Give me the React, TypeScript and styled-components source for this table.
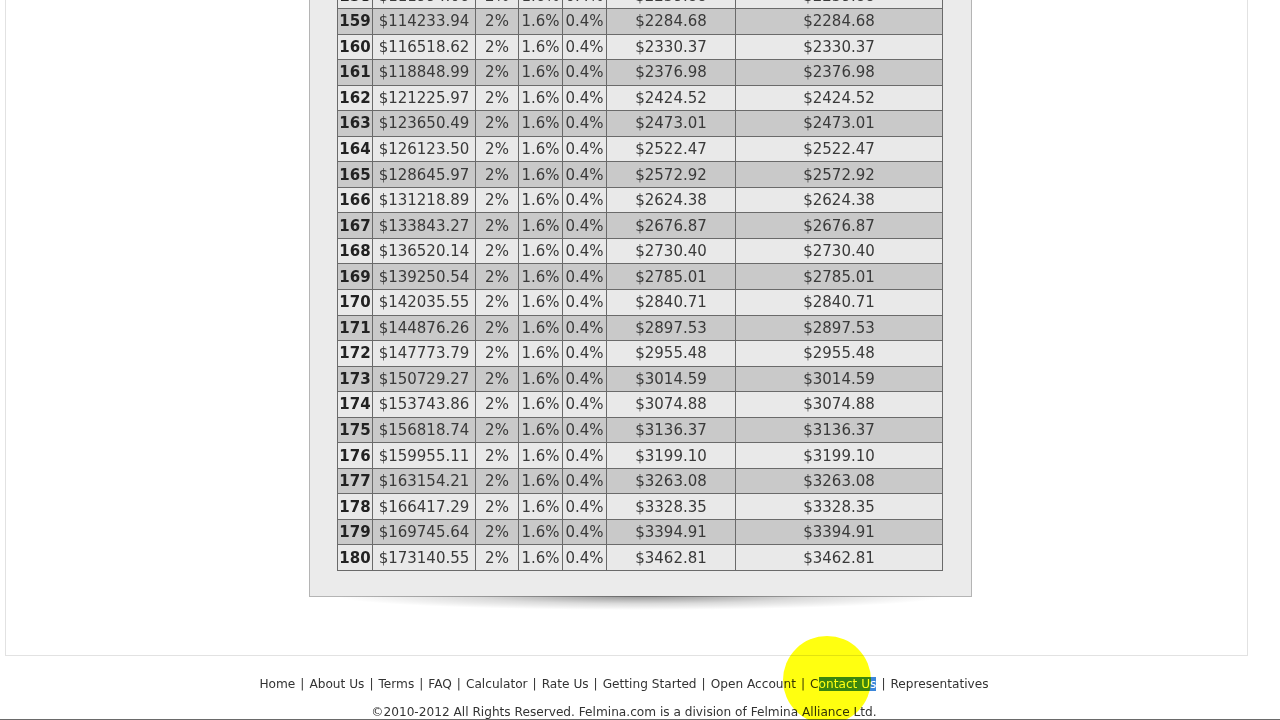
import React from "react";
import styled, { createGlobalStyle } from "styled-components";

const Global = createGlobalStyle`
  html, body { margin: 0; padding: 0; background: #ffffff; overflow: hidden; }
  body { font-family: "DejaVu Sans", Verdana, sans-serif; color: #333; }
`;

const Root = styled.div`
  position: relative;
  width: 1280px;
  margin-top: -46.55px;
`;

const ContentBox = styled.div`
  margin-left: 5px;
  width: 1243px;
  border: 1px solid #e2e2e2;
  border-top: none;
  padding: 0 275px 58px 303px;
  box-sizing: border-box;
`;

const Panel = styled.div`
  position: relative;
  width: 663px;
  box-sizing: border-box;
  background: #ebebeb;
  border: 1px solid #b4b4b4;
  padding: 28px 28px 25px 27px;
  &::after {
    content: "";
    position: absolute;
    left: 4%;
    right: 4%;
    bottom: -14px;
    height: 14px;
    background: radial-gradient(ellipse 50% 100% at 50% 0%, rgba(0,0,0,0.42), rgba(0,0,0,0.14) 55%, rgba(0,0,0,0) 100%);
  }
`;

const Table = styled.table`
  border-collapse: collapse;
  table-layout: fixed;
  width: 606px;
  font-family: "DejaVu Sans", Verdana, sans-serif;
  font-size: 15px;
  color: #333;
`;

const Row = styled.tr<{ $odd: boolean }>`
  height: 25.55px;
  background: ${(p) => (p.$odd ? "#c9c9c9" : "#e9e9e9")};
`;

const Cell = styled.td<{ $bold?: boolean }>`
  border: 1px solid #6a6a6a;
  padding: 0;
  text-align: center;
  white-space: nowrap;
  line-height: 18px;
  font-weight: ${(p) => (p.$bold ? 700 : 400)};
  color: ${(p) => (p.$bold ? "#222" : "#3a3a3a")};
`;

const Footer = styled.footer`
  width: 1248px;
  padding-top: 20px;
  text-align: center;
  font-family: "DejaVu Sans", Verdana, sans-serif;
  font-size: 12.15px;
  color: #333;
`;

const Links = styled.div`
  line-height: 16px;
`;

const Link = styled.span`
  position: relative;
`;

const Sep = styled.span`
  margin: 0 5px;
`;

const Selected = styled.span`
  background: #3b86da;
  color: #ffffff;
`;

const Copyright = styled.div`
  margin-top: 13px;
  line-height: 14px;
`;

const BottomRule = styled.div`
  width: 1280px;
  height: 3px;
  background: #6a6a6a;
`;

const Highlight = styled.div`
  position: absolute;
  left: -27px;
  top: -41px;
  width: 88px;
  height: 88px;
  border-radius: 50%;
  background: #ffff10;
  mix-blend-mode: multiply;
  pointer-events: none;
`;

const rows: [number, string, string][] = [
  [158, "$111994.06", "$2239.88"],
  [159, "$114233.94", "$2284.68"],
  [160, "$116518.62", "$2330.37"],
  [161, "$118848.99", "$2376.98"],
  [162, "$121225.97", "$2424.52"],
  [163, "$123650.49", "$2473.01"],
  [164, "$126123.50", "$2522.47"],
  [165, "$128645.97", "$2572.92"],
  [166, "$131218.89", "$2624.38"],
  [167, "$133843.27", "$2676.87"],
  [168, "$136520.14", "$2730.40"],
  [169, "$139250.54", "$2785.01"],
  [170, "$142035.55", "$2840.71"],
  [171, "$144876.26", "$2897.53"],
  [172, "$147773.79", "$2955.48"],
  [173, "$150729.27", "$3014.59"],
  [174, "$153743.86", "$3074.88"],
  [175, "$156818.74", "$3136.37"],
  [176, "$159955.11", "$3199.10"],
  [177, "$163154.21", "$3263.08"],
  [178, "$166417.29", "$3328.35"],
  [179, "$169745.64", "$3394.91"],
  [180, "$173140.55", "$3462.81"],
];

const widths = [35, 103, 43, 44, 44, 129, 207];

const links = [
  "Home",
  "About Us",
  "Terms",
  "FAQ",
  "Calculator",
  "Rate Us",
  "Getting Started",
  "Open Account",
  "Contact Us",
  "Representatives",
];

export default function App() {
  return (
    <Root>
      <Global />
      <ContentBox>
        <Panel>
          <Table>
            <colgroup>
              {widths.map((w, i) => (
                <col key={i} style={{ width: w }} />
              ))}
            </colgroup>
            <tbody>
              {rows.map(([n, bal, amt]) => (
                <Row key={n} $odd={n % 2 === 1}>
                  <Cell $bold>{n}</Cell>
                  <Cell>{bal}</Cell>
                  <Cell>2%</Cell>
                  <Cell>1.6%</Cell>
                  <Cell>0.4%</Cell>
                  <Cell>{amt}</Cell>
                  <Cell>{amt}</Cell>
                </Row>
              ))}
            </tbody>
          </Table>
        </Panel>
      </ContentBox>
      <Footer>
        <Links>
          {links.map((l, i) => (
            <React.Fragment key={l}>
              {i > 0 && <Sep>|</Sep>}
              {l === "Contact Us" ? (
                <Link>
                  C<Selected>ontact Us</Selected>
                  <Highlight />
                </Link>
              ) : (
                <Link>{l}</Link>
              )}
            </React.Fragment>
          ))}
        </Links>
        <Copyright>
          ©2010-2012 All Rights Reserved. Felmina.com is a division of Felmina Alliance Ltd.
        </Copyright>
      </Footer>
      <BottomRule />
    </Root>
  );
}
